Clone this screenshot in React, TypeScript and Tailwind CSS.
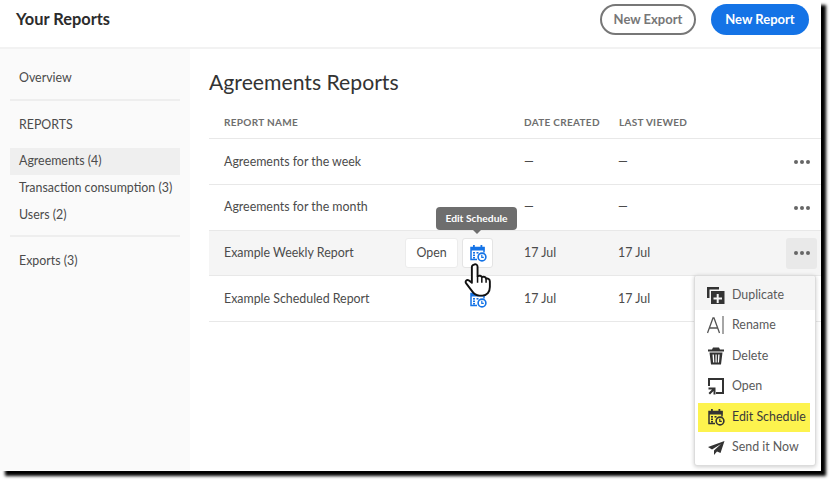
import type { ReactNode } from 'react'

const font = { fontFamily: 'Lato, "Open Sans", sans-serif' }

function ScheduleIcon({ className }: { className: string }) {
  return (
    <svg viewBox="0 0 18 18" className={className}>
      <path d="M8 15.500H2V3.500h13v5" fill="none" stroke="currentColor" strokeWidth="1.500" />
      <path d="M2 3h13.500v3.500H2z" fill="currentColor" />
      <rect x="4" y="1" width="1.800" height="3" fill="currentColor" />
      <rect x="11.500" y="1" width="1.800" height="3" fill="currentColor" />
      <rect x="4" y="8" width="2" height="1.600" fill="currentColor" />
      <rect x="7.500" y="8" width="2" height="1.600" fill="currentColor" />
      <rect x="4" y="10.500" width="2" height="1.600" fill="currentColor" />
      <rect x="4" y="13" width="2" height="1.600" fill="currentColor" />
      <circle cx="13" cy="13" r="3.900" fill="none" stroke="currentColor" strokeWidth="1.600" />
      <path d="M12.800 10.800v2.600h2" fill="none" stroke="currentColor" strokeWidth="1.200" />
    </svg>
  )
}

function Dots() {
  return (
    <div className="flex gap-[2px]">
      <span className="h-1 w-1 rounded-full bg-[#666]" />
      <span className="h-1 w-1 rounded-full bg-[#666]" />
      <span className="h-1 w-1 rounded-full bg-[#666]" />
    </div>
  )
}

function Row({ name, date, viewed, hover, children }: {
  name: string
  date: string
  viewed: string
  hover?: boolean
  children?: ReactNode
}) {
  return (
    <div className={`flex h-[45.750px] items-center border-b border-[#e8e8e8] pt-[1px] text-[12.400px] text-[#4b4b4b] ${hover ? 'bg-[#f5f5f5]' : ''}`}>
      <div className="flex w-[315px] items-center justify-between pl-[15px] pr-[31px]">
        <span>{name}</span>
        {children}
      </div>
      <div className="w-[94px]">{date}</div>
      <div className="w-[168px]">{viewed}</div>
      <div className={`flex h-[31px] w-[31px] items-center justify-center rounded-[3px] ${hover ? 'bg-[#e9e9e9]' : ''}`}>
        <Dots />
      </div>
    </div>
  )
}

function SideItem({ label, active }: { label: string; active?: boolean }) {
  return (
    <div className={`flex h-[27px] items-center whitespace-nowrap px-[9px] text-[12.400px] text-[#4b4b4b] ${active ? 'bg-[#efefef]' : ''}`}>
      {label}
    </div>
  )
}

function MenuItem({ icon, label, selected, first }: {
  icon: ReactNode
  label: string
  selected?: boolean
  first?: boolean
}) {
  return (
    <div className={`flex items-center ${first ? 'h-[34px] bg-[#f5f5f5] pt-[4px]' : 'h-[30.600px]'}`}>
      <div className={`mx-[3px] flex h-[29px] w-[112px] items-center gap-[7px] pl-[9px] text-[12.400px] ${selected ? 'bg-[#fdf34e] text-[#3a3a3a]' : 'text-[#5a5a5a]'}`}>
        <span className="flex h-[18px] w-[18px] shrink-0 items-center justify-center text-[#333]">{icon}</span>
        <span className="whitespace-nowrap">{label}</span>
      </div>
    </div>
  )
}

export default function App() {
  return (
    <div className="h-[480px] w-[830px] overflow-hidden bg-white" style={font}>
      <div className="relative flex h-[471px] w-[821px] flex-col bg-white shadow-[5px_5px_3px_#000]">
        <header className="flex h-[49px] shrink-0 items-center justify-between border-b-2 border-[#f2f2f2] pb-[8px] pl-4 pr-3">
          <h1 className="text-[16.400px] font-bold text-[#2c2c2c]">Your Reports</h1>
          <div className="flex items-center gap-[15px]">
            <button className="h-[31px] w-[96px] rounded-full border-2 border-[#777] text-[13px] font-bold text-[#777]">New Export</button>
            <button className="h-[31px] w-[98px] rounded-full bg-[#1473e6] text-[13px] font-bold text-white">New Report</button>
          </div>
        </header>

        <div className="flex min-h-0 flex-1">
          <aside className="w-[190px] shrink-0 bg-[#fafafa] px-[10px] pt-[16px]">
            <SideItem label="Overview" />
            <div className="mt-[7px] border-t-2 border-[#eeeeee]" />
            <div className="mt-[11px] flex h-[26px] items-center px-[9px] text-[12.400px] text-[#4b4b4b]">REPORTS</div>
            <div className="mt-[10px]">
              <SideItem label="Agreements (4)" active />
              <SideItem label="Transaction consumption (3)" />
              <SideItem label="Users (2)" />
            </div>
            <div className="mt-[6px] border-t-2 border-[#eeeeee]" />
            <div className="mt-[11px]">
              <SideItem label="Exports (3)" />
            </div>
          </aside>

          <main className="flex-1 pl-[19px]">
            <h2 className="mt-[18px] h-[30px] text-[21.200px] leading-[30px] text-[#333]">Agreements Reports</h2>
            <div className="mt-[12px] flex h-[30px] items-center border-b border-[#e8e8e8] pb-[2px] text-[10px] font-bold tracking-[0.3px] text-[#6e6e6e]">
              <div className="w-[315px] pl-[15px]">REPORT NAME</div>
              <div className="w-[95px]">DATE CREATED</div>
              <div>LAST VIEWED</div>
            </div>
            <Row name="Agreements for the week" date="—" viewed="—" />
            <Row name="Agreements for the month" date="—" viewed="—" />
            <Row name="Example Weekly Report" date="17 Jul" viewed="17 Jul" hover>
              <div className="flex items-center gap-[4px]">
                <button className="h-[30px] w-[53px] rounded-[3px] border border-[#ececec] bg-white text-[12.400px] text-[#4b4b4b]">Open</button>
                <div className="flex h-[30px] w-[31px] items-center justify-center rounded-[3px] border border-[#e4e4e4] bg-white text-[#1473e6]">
                  <ScheduleIcon className="h-[18px] w-[18px]" />
                </div>
              </div>
            </Row>
            <Row name="Example Scheduled Report" date="17 Jul" viewed="17 Jul">
              <div className="mr-[6px] text-[#1473e6]">
                <ScheduleIcon className="h-[18px] w-[18px]" />
              </div>
            </Row>
          </main>
        </div>

        <div className="absolute left-[436px] top-[207px] flex h-[23px] w-[81px] items-center justify-center rounded-[4px] bg-[#6e6e6e] text-[10.300px] font-bold text-white">
          Edit Schedule
          <span className="absolute -bottom-[4px] left-1/2 h-0 w-0 -translate-x-1/2 border-x-[4px] border-t-[4px] border-x-transparent border-t-[#6e6e6e]" />
        </div>

        <svg viewBox="0 0 30 38" className="absolute left-[464px] top-[262px] h-[36px] w-[29px]">
          <path d="M10 3c2-1.500 4 0 4 2v10c2-1 4-.5 4.500 1 2-1 4 0 4.500 1.500 2-.5 4 .5 4 3v6c0 5-3 9-8 9h-3c-4 0-6-2-8-5l-6-8c-1.500-2 .5-4.500 3-3l3 2.500V5c0-1 .5-1.500 1.500-2z" fill="#fff" stroke="#111" strokeWidth="2" strokeLinejoin="round" />
          <path d="M14 15v7M18.500 16.500V22M23 18v4" stroke="#111" strokeWidth="1.600" fill="none" />
        </svg>

        <div className="absolute left-[694px] top-[275px] h-[191px] w-[122px] overflow-hidden rounded-[3px] border border-[#dcdcdc] bg-white shadow-[0_1px_4px_rgba(0,0,0,0.2)]">
          <MenuItem
            first
            label="Duplicate"
            icon={
              <svg viewBox="0 0 18 18" className="h-[18px] w-[18px]" fill="currentColor">
                <path d="M0 1h12v2.500H2.500V12H0z" />
                <path fillRule="evenodd" d="M4 5h13.500v13H4zm5.700 3v3.500H6.500v2h3.200V17h2v-3.500h3.300v-2h-3.300V8z" />
              </svg>
            }
          />
          <MenuItem
            label="Rename"
            icon={
              <svg viewBox="0 0 18 18" className="h-[18px] w-[18px]" fill="none" stroke="#555" strokeWidth="1.300">
                <path d="M0.500 17 6 2h1l5.500 15M2.500 12h8" />
                <path d="M16 0v18" strokeWidth="1.500" stroke="#888" />
              </svg>
            }
          />
          <MenuItem
            label="Delete"
            icon={
              <svg viewBox="0 0 18 18" className="h-[18px] w-[18px]" fill="currentColor">
                <path d="M6 0.500h6l1 2h4v2H1v-2h4z" />
                <path fillRule="evenodd" d="M2.500 5.500h13L14 17.500H4zm3 2 .6 8h1.200l-.4-8zm3 0v8h1.200v-8zm2.700 0-.4 8h1.200l.6-8z" />
              </svg>
            }
          />
          <MenuItem
            label="Open"
            icon={
              <svg viewBox="0 0 18 18" className="h-[18px] w-[18px]" fill="currentColor">
                <path d="M1 1h16v16H9v-2h6V3H3v6H1z" />
                <path d="M1.500 10.500h7v7h-2v-3.500L3 17.500 1.500 16 5 12.500H1.500z" />
              </svg>
            }
          />
          <MenuItem label="Edit Schedule" selected icon={<ScheduleIcon className="h-[18px] w-[18px]" />} />
          <MenuItem
            label="Send it Now"
            icon={
              <svg viewBox="0 0 18 18" className="h-[18px] w-[18px]" fill="currentColor">
                <path d="M17.500 2 1 8l4 2.500L14 5l-7 6.500V16l3-3.500 3.500 1.500z" />
              </svg>
            }
          />
        </div>
      </div>
    </div>
  )
}
